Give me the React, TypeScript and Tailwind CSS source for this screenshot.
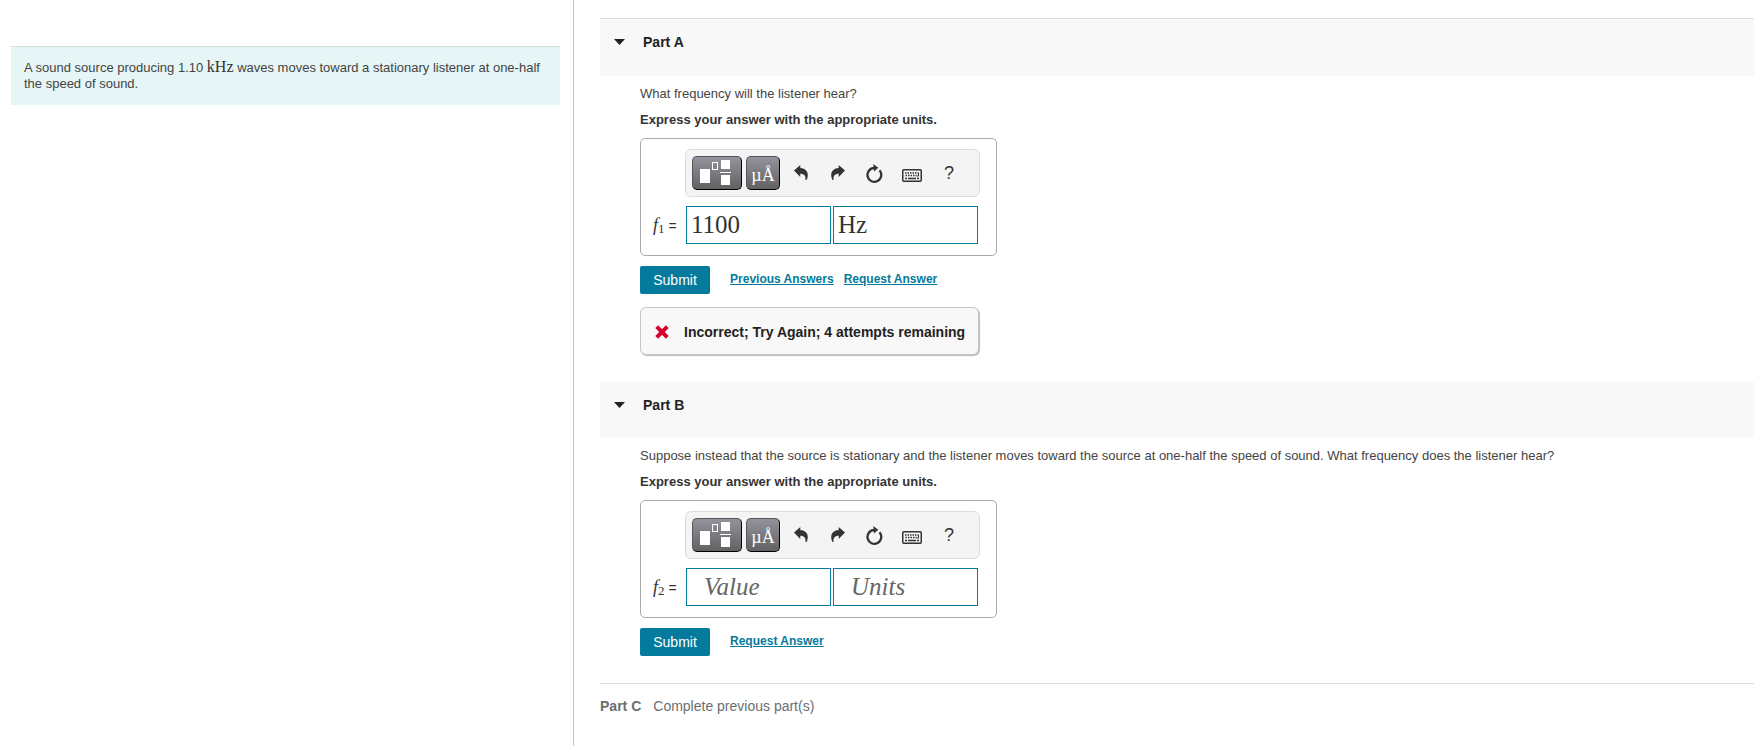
import { useState, type ReactNode } from "react";
import clsx from "clsx";

interface AnswerPart {
    id: string;
    title: string;
    question: string;
    subscript: string;
    value: string;
    units: string;
    links: string[];
    feedback?: string;
}

const parts: AnswerPart[] = [
    {
        id: "a",
        title: "Part A",
        question: "What frequency will the listener hear?",
        subscript: "1",
        value: "1100",
        units: "Hz",
        links: ["Previous Answers", "Request Answer"],
        feedback: "Incorrect; Try Again; 4 attempts remaining",
    },
    {
        id: "b",
        title: "Part B",
        question:
            "Suppose instead that the source is stationary and the listener moves toward the source at one-half the speed of sound. What frequency does the listener hear?",
        subscript: "2",
        value: "",
        units: "",
        links: ["Request Answer"],
    },
];

function TemplatesIcon() {
    return (
        <svg width="32" height="26" viewBox="0 0 32 26" aria-hidden="true">
            <rect x="0" y="9" width="10" height="14" fill="#fff" />
            <rect x="12.5" y="2.5" width="5" height="7" fill="none" stroke="#fff" />
            <rect x="21" y="0" width="9" height="9" fill="#fff" />
            <rect x="20" y="12" width="11" height="1" fill="#fff" />
            <rect x="21" y="15" width="9" height="10" fill="#fff" />
        </svg>
    );
}

function UndoIcon({ flipped = false }: { flipped?: boolean }) {
    return (
        <svg
            width="14"
            height="16"
            viewBox="0 0 14 16"
            fill="#333"
            className={clsx(flipped && "-scale-x-100")}
            aria-hidden="true"
        >
            <path d="M0 5.500 6.300 0v2.900c4.200.1 7.500 2.700 7.500 7 0 1.800-.5 3.500-1.200 5.100h-1.100c.4-4-1.200-6.200-5.200-6.200V12z" />
        </svg>
    );
}

function ResetIcon() {
    return (
        <svg width="17" height="19" viewBox="0 0 17 19" fill="none" aria-hidden="true">
            <path d="M8.300 4A6.900 6.900 0 1 0 13.500 6.300" stroke="#333" strokeWidth="2.300" />
            <path d="M7.300 0l5 3.700-4.200 3.800z" fill="#333" />
        </svg>
    );
}

function KeyboardIcon() {
    return (
        <svg width="20" height="13" viewBox="0 0 20 13" fill="none" stroke="#333" aria-hidden="true">
            <rect x=".75" y=".75" width="18.500" height="11.500" rx="1" strokeWidth="1.500" />
            <path d="M3 4h13" strokeWidth="1.300" strokeDasharray="1.500 1" />
            <path d="M3.500 6.500h11" strokeWidth="1.300" strokeDasharray="1.500 1" />
            <path d="M16.500 3.500v3.500h-2" />
            <path d="M3 9.500h2M6 9.500h8M15 9.500h2" strokeWidth="1.300" />
        </svg>
    );
}

function WrongIcon() {
    return (
        <svg width="14" height="14" viewBox="0 0 14 14" stroke="#d9002b" strokeWidth="4" aria-hidden="true">
            <path d="M1.700 1.700l10.600 10.600M12.300 1.700L1.700 12.300" />
        </svg>
    );
}

function ToolButton({ label, dark, className, children }: { label: string; dark?: boolean; className: string; children: ReactNode }) {
    return (
        <button
            type="button"
            aria-label={label}
            className={clsx(
                "flex h-[34px] items-center justify-center",
                dark && "rounded-[5px] border border-t-[#55555c] border-r-black border-b-black border-l-[#55555c] bg-linear-to-b from-[#94939c] to-[#626264] text-white",
                className
            )}
        >
            {children}
        </button>
    );
}

function Toolbar() {
    return (
        <div className="flex h-12 w-[295px] items-center rounded-md border border-[#dcdcdc] bg-[#f4f4f4] pl-1.5">
            <ToolButton dark label="Templates" className="w-[50px] pr-0.5">
                <TemplatesIcon />
            </ToolButton>
            <ToolButton dark label="Symbols" className="ml-1 w-[34px] pt-1 font-['Liberation_Serif',serif] text-lg leading-5">
                µÅ
            </ToolButton>
            <ToolButton label="Undo" className="ml-0.5 w-[37px]">
                <UndoIcon />
            </ToolButton>
            <ToolButton label="Redo" className="w-[37px]">
                <UndoIcon flipped />
            </ToolButton>
            <ToolButton label="Reset" className="w-[37px]">
                <ResetIcon />
            </ToolButton>
            <ToolButton label="Keyboard shortcuts" className="w-[37px] pt-1">
                <KeyboardIcon />
            </ToolButton>
            <ToolButton label="Help" className="w-[38px] text-lg text-[#333]">
                ?
            </ToolButton>
        </div>
    );
}

const fieldClass =
    "h-[38px] w-[145px] border border-[#047a9c] bg-white pl-1 font-['Liberation_Serif',serif] text-[25px] text-[#333] outline-none placeholder:text-[#666] placeholder:italic placeholder-shown:pl-[17px]";

function AnswerBox({ part }: { part: AnswerPart }) {
    const [value, setValue] = useState(part.value);
    const [units, setUnits] = useState(part.units);

    return (
        <div className="flex w-[357px] flex-col gap-[9px] rounded-[5px] border border-[#aaa] pt-2.5 pb-[11px] pl-3">
            <div className="pl-8">
                <Toolbar />
            </div>
            <div className="flex items-center">
                <label htmlFor={`value-${part.id}`} className="w-[33px] text-sm leading-5 text-[#333]">
                    <span className="font-['Liberation_Serif',serif] text-lg italic">f</span>
                    <sub className="bottom-0 align-[-2px] font-['Liberation_Serif',serif] text-[13px]">{part.subscript}</sub> =
                </label>
                <div className="flex gap-0.5">
                    <input
                        id={`value-${part.id}`}
                        className={fieldClass}
                        placeholder="Value"
                        value={value}
                        onChange={(e) => setValue(e.target.value)}
                    />
                    <input
                        aria-label="Units"
                        className={fieldClass}
                        placeholder="Units"
                        value={units}
                        onChange={(e) => setUnits(e.target.value)}
                    />
                </div>
            </div>
        </div>
    );
}

function PartSection({ part, first }: { part: AnswerPart; first: boolean }) {
    const [open, setOpen] = useState(true);

    return (
        <section>
            <h2 className={clsx("h-14 bg-[#f8f8f8] text-sm font-bold text-[#222]", first && "box-content border-t border-[#ddd] pb-px")}>
                <button
                    type="button"
                    aria-expanded={open}
                    onClick={() => setOpen(!open)}
                    className="flex w-full items-center gap-[18px] pt-[13px] pl-3.5 leading-5"
                >
                    <svg width="11" height="6" viewBox="0 0 11 6" fill="#222" className={clsx(!open && "-rotate-90")} aria-hidden="true">
                        <path d="M0 0h11L5.500 6z" />
                    </svg>
                    {part.title}
                </button>
            </h2>
            {open && (
                <div className="flex flex-col gap-2.5 pt-2.5 pb-[27px] pl-10 text-[13px] leading-4">
                    <p className="text-[#444]">{part.question}</p>
                    <p className="font-bold text-[#333]">Express your answer with the appropriate units.</p>
                    <AnswerBox part={part} />
                    <div className="flex items-center">
                        <button type="button" className="h-7 w-[70px] rounded-xs bg-[#047a9c] text-sm text-white">
                            Submit
                        </button>
                        <div className="ml-5 flex gap-2.5 pb-0.5 text-xs font-bold text-[#047a9c]">
                            {part.links.map((link) => (
                                <a key={link} href="#" className="underline">
                                    {link}
                                </a>
                            ))}
                        </div>
                    </div>
                    {part.feedback && (
                        <div className="mt-[3px] flex h-12 w-[339px] items-center gap-[15px] rounded-md border border-[#c7c7c7] bg-[#f8f8f8] pt-0.5 pl-3.5 text-sm font-bold text-[#222] shadow-[1px_1px_1px_#bbb]">
                            <WrongIcon />
                            {part.feedback}
                        </div>
                    )}
                </div>
            )}
        </section>
    );
}

export default function App() {
    return (
        <div className="flex min-h-screen bg-white font-['Liberation_Sans',Arial,sans-serif]">
            <aside className="w-[32.67%] shrink-0 pt-[46px] pr-[13px] pl-[11px]">
                <div className="border-t border-[#d6dfde] bg-[#e6f6f6] px-[13px] pt-3 pb-[13px] text-[13px] leading-4 text-[#444]">
                    A sound source producing 1.10 <span className="font-['Liberation_Serif',serif] text-base leading-4 text-[#333]">kHz</span> waves
                    moves toward a stationary listener at one-half the speed of sound.
                </div>
            </aside>
            <main className="min-w-0 flex-1 border-l border-[#b9c8d6] pt-[18px] pl-[26px]">
                {parts.map((part, idx) => (
                    <PartSection key={part.id} part={part} first={idx === 0} />
                ))}
                <section className="flex gap-3 border-t border-[#ddd] pt-3 text-sm text-[#6a7070]">
                    <h2 className="font-bold">Part C</h2>
                    <p>Complete previous part(s)</p>
                </section>
            </main>
        </div>
    );
}
